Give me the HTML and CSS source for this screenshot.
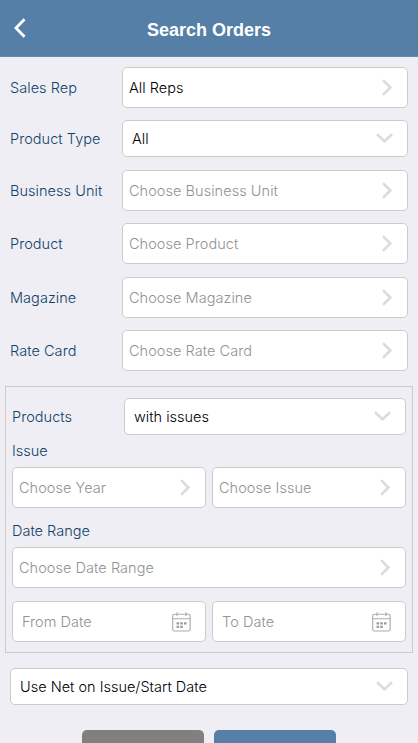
FILE: index.html
```html
<!DOCTYPE html>
<html lang="en">
<head>
<meta charset="utf-8">
<title>Search Orders</title>
<link rel="stylesheet" href="styles.css">
</head>
<body>
<svg class="defs" aria-hidden="true">
  <symbol id="right" viewBox="0 0 10 17"><path d="M1 1.2 8.3 8.5 1 15.8"/></symbol>
  <symbol id="down" viewBox="0 0 17 10"><path d="M1 1.2 8.5 8.3 16 1.2"/></symbol>
  <symbol id="calendar" viewBox="0 0 19 20">
    <rect x=".7" y="2.2" width="17.4" height="16.8" rx="1.5"/>
    <path d="M.7 6.7H18.1M5 .2V4M14 .2V4"/>
    <path class="days" d="M4.6 11.4H14.5M4.6 14.9H11"/>
  </symbol>
</svg>
<header class="bar">
  <svg class="back" viewBox="0 0 12 20"><path d="M10.500 1.200 2 10l8.500 8.800"/></svg>
  <h1 class="title">Search Orders</h1>
</header>
<main class="form">
  <div class="row"><span class="label">Sales Rep</span><div class="field filled"><span class="text">All Reps</span><svg class="right"><use href="#right"/></svg></div></div>
  <div class="row type"><span class="label">Product Type</span><div class="field select"><span class="text">All</span><svg class="down"><use href="#down"/></svg></div></div>
  <div class="row"><span class="label">Business Unit</span><div class="field"><span class="text">Choose Business Unit</span><svg class="right"><use href="#right"/></svg></div></div>
  <div class="row"><span class="label">Product</span><div class="field"><span class="text">Choose Product</span><svg class="right"><use href="#right"/></svg></div></div>
  <div class="row spaced"><span class="label">Magazine</span><div class="field"><span class="text">Choose Magazine</span><svg class="right"><use href="#right"/></svg></div></div>
  <div class="row"><span class="label">Rate Card</span><div class="field"><span class="text">Choose Rate Card</span><svg class="right"><use href="#right"/></svg></div></div>
  <section class="group">
    <div class="row"><span class="label">Products</span><div class="field select"><span class="text">with issues</span><svg class="down"><use href="#down"/></svg></div></div>
    <div class="heading">Issue</div>
    <div class="pair">
      <div class="field year"><span class="text">Choose Year</span><svg class="right"><use href="#right"/></svg></div>
      <div class="field"><span class="text">Choose Issue</span><svg class="right"><use href="#right"/></svg></div>
    </div>
    <div class="heading range">Date Range</div>
    <div class="field"><span class="text">Choose Date Range</span><svg class="right"><use href="#right"/></svg></div>
    <div class="pair dates">
      <div class="field date"><span class="text">From Date</span><svg class="calendar"><use href="#calendar"/></svg></div>
      <div class="field date"><span class="text">To Date</span><svg class="calendar"><use href="#calendar"/></svg></div>
    </div>
  </section>
  <div class="field select net"><span class="text">Use Net on Issue/Start Date</span><svg class="down"><use href="#down"/></svg></div>
  <div class="actions"><div class="button"></div><div class="button primary"></div></div>
</main>
</body>
</html>
```
FILE: styles.css
```css
* { box-sizing: border-box; }
body {
  margin: 0;
  height: 743px;
  overflow: hidden;
  background: #efeef4;
  font: 300 14.5px/20px Inter, "Liberation Sans", sans-serif;
  color: #000;
}
svg { flex: none; fill: none; stroke: #dcdcdc; stroke-width: 2.6; }
.defs { display: none; }
.bar {
  height: 57px;
  display: grid;
  grid-template-columns: 40px 1fr 40px;
  align-items: center;
  background: #557fa6;
  border-bottom: 1px solid #6389ad;
}
.back { width: 12px; height: 20px; margin-left: 13.5px; stroke: #fff; stroke-width: 2.8; }
.title {
  margin: 3px 0 0;
  text-align: center;
  color: #fff;
  font: bold 18px/24px "Liberation Sans", sans-serif;
}
.form { padding: 10px 10px 0; }
.row { display: flex; align-items: center; margin-bottom: 12px; }
.row.type { margin-bottom: 13px; }
.row.spaced { margin: 13px 0 12px; }
.label { width: 112px; flex: none; letter-spacing: 0.05px; }
.label, .heading { color: #0f4269; }
.field {
  flex: 1;
  min-width: 0;
  height: 41px;
  display: flex;
  align-items: center;
  justify-content: space-between;
  padding: 0 15px 0 6px;
  background: #fff;
  border: 1px solid #ccc;
  border-radius: 5px;
  color: #929292;
}
.text { white-space: nowrap; letter-spacing: 0.05px; }
.filled, .select { color: #000; }
.select { height: 37px; padding: 0 14px 0 9px; }
.select .text { padding-top: 1px; letter-spacing: 0; }
.right { width: 10px; height: 17px; }
.down { width: 17px; height: 10px; margin-top: -1px; }
.calendar { width: 19px; height: 20px; stroke: #aaa; stroke-width: 1.1; }
.days { stroke: #999; stroke-width: 2.3; stroke-dasharray: 2.5 1.2; }
.group {
  margin: 15px -5px;
  height: 267px;
  padding: 11px 6px 0;
  border: 1px solid #ccc;
}
.group .row { margin: 0 0 6px; }
.group > .field { width: 100%; }
.heading { height: 20px; margin-bottom: 6px; }
.range { margin: 13px 0 6px; }
.pair { display: grid; grid-template-columns: 1fr 1fr; gap: 6px; }
.dates { margin-top: 13px; }
.date { padding: 0 14px 0 9px; }
.net { width: 100%; }
.actions { display: flex; justify-content: center; gap: 10px; margin-top: 25px; }
.button { width: 122px; height: 40px; border-radius: 5px; background: #808080; }
.primary { background: #557fa6; }
```
